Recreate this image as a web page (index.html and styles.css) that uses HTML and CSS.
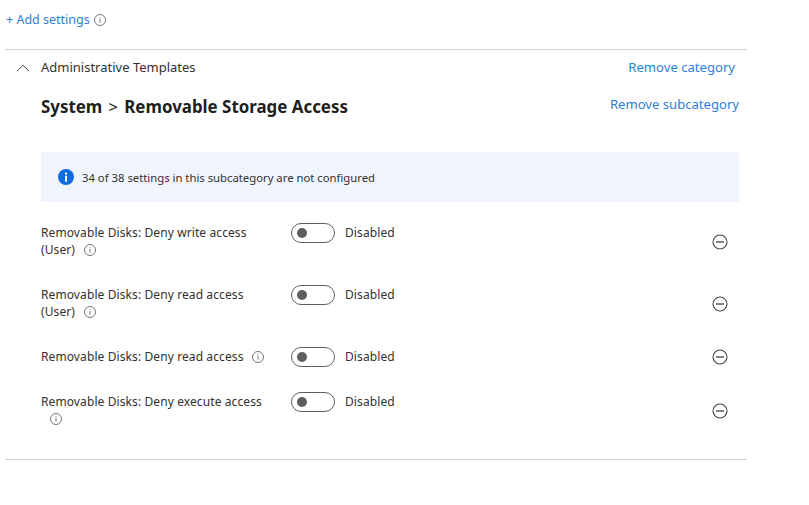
FILE: index.html
```html
<!DOCTYPE html>
<html lang="en">
<head>
  <meta charset="UTF-8" />
  <title>Removable Storage Access</title>
  <link rel="stylesheet" href="styles.css">
</head>
<body>
  <svg class="icon-defs" width="0" height="0">
    <symbol id="info" viewBox="0 0 12 12">
      <circle cx="6" cy="6" r="5.5" fill="none" stroke="currentColor" stroke-width="1"/>
      <rect x="5.5" y="5" width="1" height="3.6" fill="currentColor"/>
      <rect x="5.5" y="3.2" width="1" height="1" fill="currentColor"/>
    </symbol>
  </svg>

  <div class="page">
    <div class="add-row">
      <a class="link add-link" href="#">+ Add settings</a>
      <svg class="info-icon"><use href="#info"/></svg>
    </div>

    <div class="section">
      <div class="category-row">
        <svg class="chevron" viewBox="0 0 14 8"><path d="M1 7.2 7 1.2l6 6" fill="none" stroke="#444" stroke-width="1"/></svg>
        <span class="category-name">Administrative Templates</span>
        <a class="link remove-category" href="#">Remove category</a>
      </div>

      <div class="title-row">
        <h2>System <span class="sep">&gt;</span> Removable Storage Access</h2>
        <a class="link" href="#">Remove subcategory</a>
      </div>

      <div class="banner">
        <svg class="banner-icon" viewBox="0 0 16 16">
          <circle cx="8" cy="8" r="8" fill="#0f6cdc"/>
          <rect x="7" y="6.8" width="2" height="5.8" fill="#fff"/>
          <rect x="7" y="3.6" width="2" height="2" fill="#fff"/>
        </svg>
        <span class="banner-text">34 of 38 settings in this subcategory are not configured</span>
      </div>

      <div class="setting">
        <div class="setting-name">Removable Disks: Deny write access (User)<svg class="info-icon"><use href="#info"/></svg></div>
        <div class="toggle"><span class="knob"></span></div>
        <div class="state">Disabled</div>
        <svg class="minus" viewBox="0 0 16 16"><circle cx="8" cy="8" r="7" fill="none" stroke="#444" stroke-width="1.1"/><path d="M4 8h8" stroke="#333" stroke-width="1.2"/></svg>
      </div>

      <div class="setting">
        <div class="setting-name">Removable Disks: Deny read access (User)<svg class="info-icon"><use href="#info"/></svg></div>
        <div class="toggle"><span class="knob"></span></div>
        <div class="state">Disabled</div>
        <svg class="minus" viewBox="0 0 16 16"><circle cx="8" cy="8" r="7" fill="none" stroke="#444" stroke-width="1.1"/><path d="M4 8h8" stroke="#333" stroke-width="1.2"/></svg>
      </div>

      <div class="setting">
        <div class="setting-name">Removable Disks: Deny read access<svg class="info-icon"><use href="#info"/></svg></div>
        <div class="toggle"><span class="knob"></span></div>
        <div class="state">Disabled</div>
        <svg class="minus" viewBox="0 0 16 16"><circle cx="8" cy="8" r="7" fill="none" stroke="#444" stroke-width="1.1"/><path d="M4 8h8" stroke="#333" stroke-width="1.2"/></svg>
      </div>

      <div class="setting">
        <div class="setting-name">Removable Disks: Deny execute access<svg class="info-icon"><use href="#info"/></svg></div>
        <div class="toggle"><span class="knob"></span></div>
        <div class="state">Disabled</div>
        <svg class="minus" viewBox="0 0 16 16"><circle cx="8" cy="8" r="7" fill="none" stroke="#444" stroke-width="1.1"/><path d="M4 8h8" stroke="#333" stroke-width="1.2"/></svg>
      </div>
    </div>
  </div>
</body>
</html>
```

FILE: styles.css
```css
body {
  font-family: "Noto Sans", "Open Sans", sans-serif;
  font-size: 12px;
  line-height: 17px;
  color: #323130;
  background: #fff;
  margin: 0;
  padding: 0;
}

.icon-defs {
  display: block;
}

.page {
  width: 742px;
  margin-left: 5px;
}

.link {
  color: #2f7fd6;
  text-decoration: none;
  font-size: 13.1px;
}

.add-link {
  font-size: 12.5px;
}

.info-icon {
  width: 12px;
  height: 12px;
  color: #777;
  vertical-align: -2px;
  margin-left: 9px;
}

.add-row {
  height: 49px;
  padding: 11px 0 0 1px;
  box-sizing: border-box;
}

.add-row .info-icon {
  margin-left: 1px;
}

.section {
  border-top: 1px solid #d4d4d4;
  border-bottom: 1px solid #d4d4d4;
  height: 411px;
  box-sizing: border-box;
  padding-top: 9px;
}

.category-row {
  display: flex;
  align-items: center;
  height: 17px;
  padding-right: 12px;
}

.chevron {
  width: 14px;
  height: 8px;
  margin-left: 11px;
  margin-right: 11px;
}

.category-name {
  font-size: 13px;
  flex: 1;
}

.title-row {
  display: flex;
  justify-content: space-between;
  padding: 20px 8px 0 36px;
  height: 58px;
  box-sizing: border-box;
}

.title-row h2 {
  margin: 0;
  font-size: 16.9px;
  line-height: 22px;
  font-weight: 700;
  color: #201f1e;
}

.sep {
  margin: 0 2px 0 1.5px;
  font-weight: 400;
}

.banner {
  display: flex;
  align-items: center;
  gap: 8px;
  margin: 18px 8px 22px 36px;
  height: 50px;
  padding-left: 17px;
  background: #f0f5fd;
  border-radius: 2px;
}

.banner-icon {
  width: 16px;
  height: 16px;
}

.banner-text {
  font-size: 11.3px;
}

.setting {
  display: grid;
  grid-template-columns: 240px 44px 1fr 16px;
  column-gap: 10px;
  margin-left: 36px;
  padding-right: 19px;
  padding-bottom: 28px;
  letter-spacing: 0.1px;
}

.setting-name {
  padding-right: 10px;
}

.toggle {
  width: 44px;
  height: 20px;
  box-sizing: border-box;
  border: 1px solid #605e5c;
  border-radius: 10px;
  display: flex;
  align-items: center;
  padding-left: 5px;
  margin-top: -1px;
  margin-bottom: -2px;
}

.knob {
  width: 10px;
  height: 10px;
  border-radius: 50%;
  background: #605e5c;
}

.minus {
  width: 16px;
  height: 16px;
  align-self: center;
  margin-top: 1px;
}
```
